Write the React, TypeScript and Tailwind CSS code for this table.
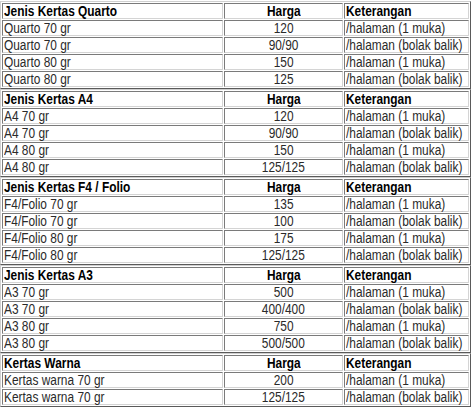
import React from "react";

type Row = [string, string, string];
type Section = { title: string; rows: Row[] };

const sections: Section[] = [
  {
    title: "Jenis Kertas Quarto",
    rows: [
      ["Quarto 70 gr", "120", "/halaman (1 muka)"],
      ["Quarto 70 gr", "90/90", "/halaman (bolak balik)"],
      ["Quarto 80 gr", "150", "/halaman (1 muka)"],
      ["Quarto 80 gr", "125", "/halaman (bolak balik)"],
    ],
  },
  {
    title: "Jenis Kertas A4",
    rows: [
      ["A4 70 gr", "120", "/halaman (1 muka)"],
      ["A4 70 gr", "90/90", "/halaman (bolak balik)"],
      ["A4 80 gr", "150", "/halaman (1 muka)"],
      ["A4 80 gr", "125/125", "/halaman (bolak balik)"],
    ],
  },
  {
    title: "Jenis Kertas F4 / Folio",
    rows: [
      ["F4/Folio 70 gr", "135", "/halaman (1 muka)"],
      ["F4/Folio 70 gr", "100", "/halaman (bolak balik)"],
      ["F4/Folio 80 gr", "175", "/halaman (1 muka)"],
      ["F4/Folio 80 gr", "125/125", "/halaman (bolak balik)"],
    ],
  },
  {
    title: "Jenis Kertas A3",
    rows: [
      ["A3 70 gr", "500", "/halaman (1 muka)"],
      ["A3 70 gr", "400/400", "/halaman (bolak balik)"],
      ["A3 80 gr", "750", "/halaman (1 muka)"],
      ["A3 80 gr", "500/500", "/halaman (bolak balik)"],
    ],
  },
  {
    title: "Kertas Warna",
    rows: [
      ["Kertas warna 70 gr", "200", "/halaman (1 muka)"],
      ["Kertas warna 70 gr", "125/125", "/halaman (bolak balik)"],
    ],
  },
];

const cell =
  "border border-t-[#7a7a7a] border-l-[#7a7a7a] border-b-[#d4d4d4] border-r-[#d4d4d4] h-[16px] px-[1px] py-0 leading-[14px] align-middle whitespace-nowrap";

function L({ children }: { children: React.ReactNode }) {
  return <span className="inline-block origin-left scale-x-[0.85]">{children}</span>;
}
function C({ children }: { children: React.ReactNode }) {
  return <span className="inline-block origin-center scale-x-[0.85]">{children}</span>;
}

export default function App() {
  return (
    <div className="bg-white w-[474px] h-[412px] pt-[1px] font-['Liberation_Sans',Arial,sans-serif] text-[14px] text-[#2a2a2a] overflow-hidden">
      {sections.map((s) => (
        <table
          key={s.title}
          className="w-[471px] table-fixed border-separate border-spacing-[1px] border border-t-[#d0d0d0] border-l-[#d0d0d0] border-b-[#5a5a5a] border-r-[#5a5a5a]"
        >
          <colgroup>
            <col className="w-[221px]" />
            <col className="w-[119px]" />
            <col className="w-[125px]" />
          </colgroup>
          <tbody>
            <tr>
              <td className={`${cell} font-bold text-black text-left`}>
                <L>{s.title}</L>
              </td>
              <td className={`${cell} font-bold text-black text-center`}>
                <C>Harga</C>
              </td>
              <td className={`${cell} font-bold text-black text-left`}>
                <L>Keterangan</L>
              </td>
            </tr>
            {s.rows.map((r, i) => (
              <tr key={i}>
                <td className={`${cell} text-left`}>
                  <L>{r[0]}</L>
                </td>
                <td className={`${cell} text-center`}>
                  <C>{r[1]}</C>
                </td>
                <td className={`${cell} text-left`}>
                  <L>{r[2]}</L>
                </td>
              </tr>
            ))}
          </tbody>
        </table>
      ))}
    </div>
  );
}
